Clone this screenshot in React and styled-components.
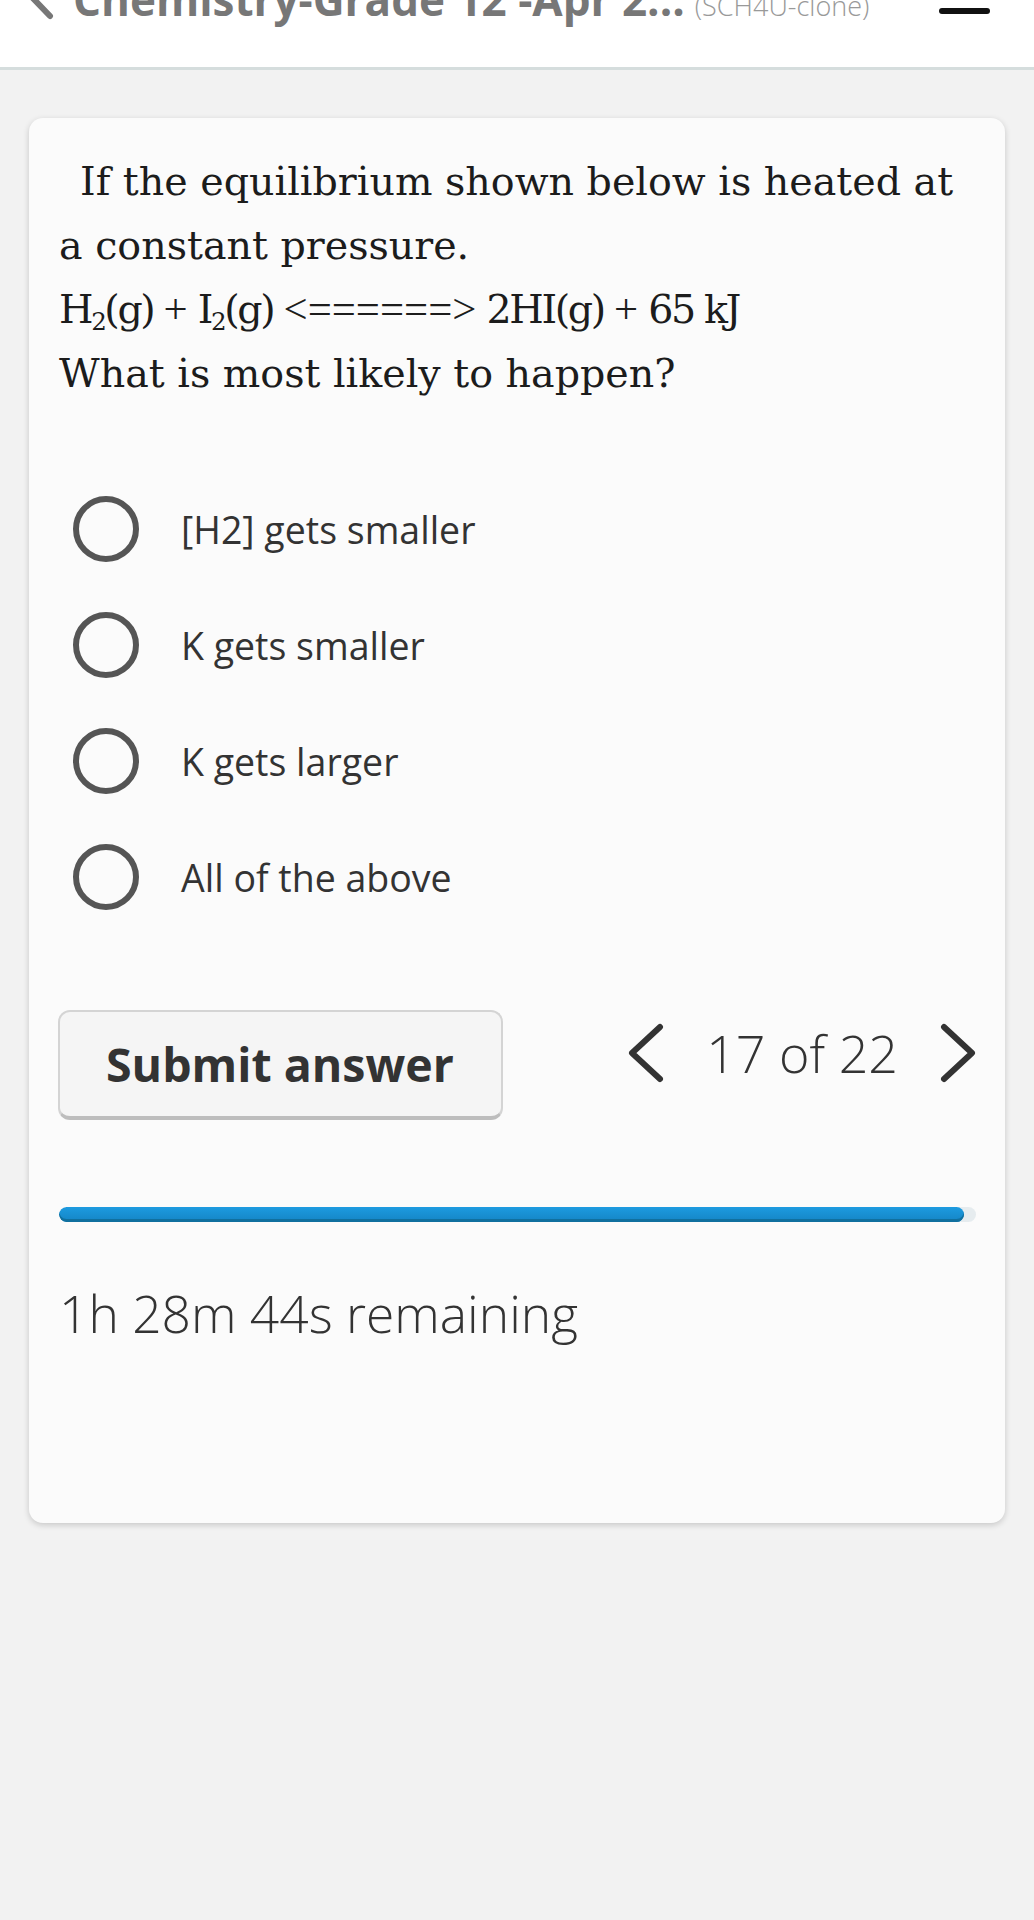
import styled, { createGlobalStyle } from 'styled-components'

const GlobalStyle = createGlobalStyle`
  html, body {
    margin: 0;
    padding: 0;
    background: #f2f2f2;
  }
  body {
    font-family: "Open Sans", "Noto Sans", sans-serif;
    color: #333;
  }
`

const Page = styled.div`
  min-height: 1920px;
  background: #f2f2f2;
  overflow: hidden;
`

const Header = styled.header`
  height: 67px;
  background: #fff;
  border-bottom: 3px solid #d5dddd;
  overflow: hidden;
  display: flex;
  align-items: flex-start;
  padding: 0 44px 0 20px;
`

const HeaderRow = styled.div`
  flex: 1;
  display: flex;
  align-items: flex-start;
  margin-top: -23px;
`

const BackIcon = styled.svg`
  width: 34px;
  height: 60px;
  margin-top: -17px;
  flex-shrink: 0;
`

const TitleGroup = styled.div`
  display: flex;
  align-items: baseline;
  gap: 10px;
  margin-left: 19px;
  white-space: nowrap;
`

const Title = styled.span`
  font-size: 44px;
  line-height: 1;
  font-weight: 700;
  color: #777;
`

const Subtitle = styled.span`
  font-size: 27px;
  line-height: 1;
  font-weight: 300;
  color: #999;
`

const Burger = styled.div`
  margin-left: auto;
  margin-top: 1px;
  display: flex;
  flex-direction: column;
  gap: 9px;
`

const BurgerBar = styled.span`
  display: block;
  width: 51px;
  height: 6px;
  border-radius: 3px;
  background: #111;
`

const Card = styled.main`
  margin: 48px 29px 0;
  background: #fbfbfb;
  border-radius: 14px;
  box-shadow: 0 2px 6px rgba(0, 0, 0, 0.18);
  padding: 31px 29px 0 30px;
  height: 1405px;
  box-sizing: border-box;
`

const Question = styled.div`
  font-family: "DejaVu Serif", "Liberation Serif", serif;
  font-size: 39.6px;
  line-height: 64px;
  color: #1c1c1c;
`

const QuestionLine = styled.div`
  padding-left: ${(p) => (p.$indent ? '21px' : '0')};
  letter-spacing: ${(p) => (p.$tight ? '-2.4px' : '0')};
  white-space: nowrap;
`

const Sub = styled.sub`
  font-size: 0.62em;
  vertical-align: -0.3em;
  line-height: 0;
`

const Op = styled.span`
  font-family: "Liberation Serif", serif;
  font-size: 1.08em;
  letter-spacing: 0;
`

const Options = styled.div`
  display: flex;
  flex-direction: column;
  gap: 50px;
  margin-top: 91px;
  padding-left: 14px;
`

const Option = styled.label`
  display: flex;
  align-items: center;
  gap: 42px;
  font-size: 37.5px;
  color: #333;
  cursor: pointer;
`

const Radio = styled.span`
  width: 66px;
  height: 66px;
  box-sizing: border-box;
  border: 6px solid #555;
  border-radius: 50%;
  flex-shrink: 0;
`

const ActionRow = styled.div`
  display: flex;
  justify-content: space-between;
  align-items: flex-start;
  margin-top: 100px;
`

const SubmitButton = styled.button`
  width: 445px;
  height: 110px;
  box-sizing: border-box;
  padding: 0 0 0 46px;
  text-align: left;
  background: #f5f5f5;
  border: 2px solid #d4d4d4;
  border-bottom: 4px solid #bdbdbd;
  border-radius: 12px;
  font-family: "Open Sans", "Noto Sans", sans-serif;
  font-size: 46.5px;
  font-weight: 700;
  color: #333;
  margin-left: -1px;
`

const Pager = styled.div`
  display: flex;
  align-items: center;
  gap: 42px;
  margin-top: 13px;
`

const PagerText = styled.span`
  font-size: 52px;
  font-weight: 300;
  color: #333;
  line-height: 1;
`

const Chevron = styled.svg`
  width: 36px;
  height: 60px;
`

const Track = styled.div`
  margin-top: 87px;
  height: 15px;
  border-radius: 8px;
  background: #e6ecef;
  overflow: hidden;
`

const Fill = styled.div`
  height: 100%;
  border-radius: 8px;
  background: linear-gradient(#1d9be0, #1484c4);
  box-shadow: inset 0 -3px 0 #10709f;
`

const Remaining = styled.div`
  margin-top: 56px;
  font-size: 51.5px;
  font-weight: 300;
  color: #333;
`

const options = ['[H2] gets smaller', 'K gets smaller', 'K gets larger', 'All of the above']

export default function App() {
  const current = 17
  const total = 22
  const progress = 0.987

  return (
    <Page>
      <GlobalStyle />
      <Header>
        <HeaderRow>
          <BackIcon viewBox="0 0 34 60">
            <polyline points="30,4 5,30 30,56" fill="none" stroke="#777" strokeWidth="6" strokeLinecap="round" />
          </BackIcon>
          <TitleGroup>
            <Title>Chemistry-Grade 12 -Apr 2...</Title>
            <Subtitle>(SCH4U-clone)</Subtitle>
          </TitleGroup>
          <Burger>
            <BurgerBar />
            <BurgerBar />
            <BurgerBar />
          </Burger>
        </HeaderRow>
      </Header>

      <Card>
        <Question>
          <QuestionLine $indent>If the equilibrium shown below is heated at</QuestionLine>
          <QuestionLine>a constant pressure.</QuestionLine>
          <QuestionLine $tight>
            H<Sub>2</Sub>(g) <Op>+</Op> I<Sub>2</Sub>(g) <Op>&lt;======&gt;</Op> 2HI(g) <Op>+</Op> 65 kJ
          </QuestionLine>
          <QuestionLine>What is most likely to happen?</QuestionLine>
        </Question>

        <Options>
          {options.map((text) => (
            <Option key={text}>
              <Radio />
              {text}
            </Option>
          ))}
        </Options>

        <ActionRow>
          <SubmitButton>Submit answer</SubmitButton>
          <Pager>
            <Chevron viewBox="0 0 36 60">
              <polyline points="32,4 4,30 32,56" fill="none" stroke="#333" strokeWidth="6" strokeLinecap="round" strokeLinejoin="round" />
            </Chevron>
            <PagerText>
              {current} of {total}
            </PagerText>
            <Chevron viewBox="0 0 36 60">
              <polyline points="4,4 32,30 4,56" fill="none" stroke="#333" strokeWidth="6" strokeLinecap="round" strokeLinejoin="round" />
            </Chevron>
          </Pager>
        </ActionRow>

        <Track>
          <Fill style={{ width: `${progress * 100}%` }} />
        </Track>

        <Remaining>1h 28m 44s remaining</Remaining>
      </Card>
    </Page>
  )
}
